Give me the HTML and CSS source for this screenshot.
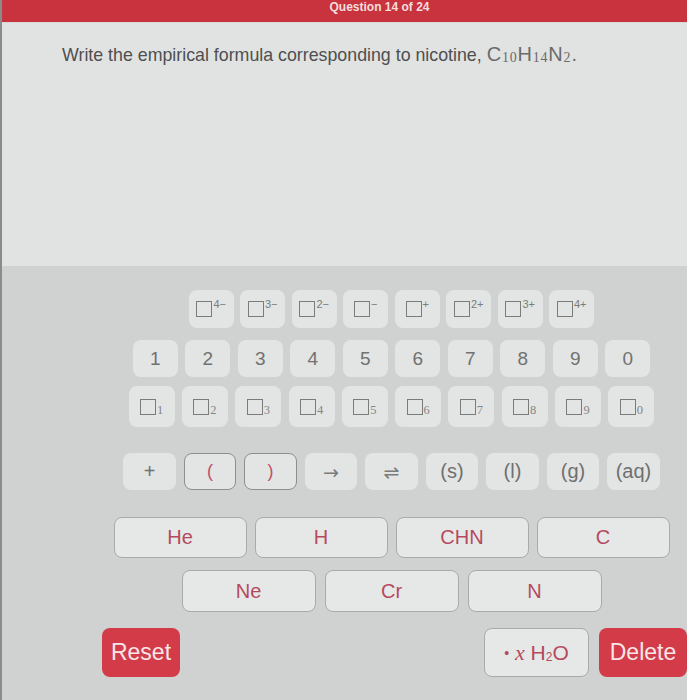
FILE: index.html
```html
<!DOCTYPE html>
<html>
<head>
<meta charset="utf-8">
<link rel="stylesheet" href="styles.css">
</head>
<body>
<div class="page">
  <header class="topbar"><span class="qnum">Question 14 of 24</span></header>
  <section class="question">
    <p class="prompt">Write the empirical formula corresponding to nicotine, <span class="formula">C<sub>10</sub>H<sub>14</sub>N<sub>2</sub>.</span></p>
  </section>
  <section class="keypad">
    <div class="row row-charge">
      <button class="key"><span class="box"></span><sup>4−</sup></button>
      <button class="key"><span class="box"></span><sup>3−</sup></button>
      <button class="key"><span class="box"></span><sup>2−</sup></button>
      <button class="key"><span class="box"></span><sup>−</sup></button>
      <button class="key"><span class="box"></span><sup>+</sup></button>
      <button class="key"><span class="box"></span><sup>2+</sup></button>
      <button class="key"><span class="box"></span><sup>3+</sup></button>
      <button class="key"><span class="box"></span><sup>4+</sup></button>
    </div>
    <div class="row row-digit">
      <button class="key num">1</button>
      <button class="key num">2</button>
      <button class="key num">3</button>
      <button class="key num">4</button>
      <button class="key num">5</button>
      <button class="key num">6</button>
      <button class="key num">7</button>
      <button class="key num">8</button>
      <button class="key num">9</button>
      <button class="key num">0</button>
    </div>
    <div class="row row-sub">
      <button class="key"><span class="box"></span><sub>1</sub></button>
      <button class="key"><span class="box"></span><sub>2</sub></button>
      <button class="key"><span class="box"></span><sub>3</sub></button>
      <button class="key"><span class="box"></span><sub>4</sub></button>
      <button class="key"><span class="box"></span><sub>5</sub></button>
      <button class="key"><span class="box"></span><sub>6</sub></button>
      <button class="key"><span class="box"></span><sub>7</sub></button>
      <button class="key"><span class="box"></span><sub>8</sub></button>
      <button class="key"><span class="box"></span><sub>9</sub></button>
      <button class="key"><span class="box"></span><sub>0</sub></button>
    </div>
    <div class="row row-sym">
      <button class="key sym">+</button>
      <button class="key sym paren">(</button>
      <button class="key sym paren">)</button>
      <button class="key sym arrow">→</button>
      <button class="key sym arrow">⇌</button>
      <button class="key sym">(s)</button>
      <button class="key sym">(l)</button>
      <button class="key sym">(g)</button>
      <button class="key sym">(aq)</button>
    </div>
    <div class="row row-el1">
      <button class="el">He</button>
      <button class="el">H</button>
      <button class="el">CHN</button>
      <button class="el">C</button>
    </div>
    <div class="row row-el2">
      <button class="el">Ne</button>
      <button class="el">Cr</button>
      <button class="el">N</button>
    </div>
    <div class="row row-act">
      <button class="act">Reset</button>
      <button class="el water"><span class="dot">•</span> <i class="xv">x</i> H<sub>2</sub>O</button>
      <button class="act del">Delete</button>
    </div>
  </section>
</div>
</body>
</html>
```
FILE: styles.css
```css
* { box-sizing: border-box; }
html, body { margin: 0; padding: 0; }
body {
  width: 687px;
  height: 700px;
  overflow: hidden;
  background: #d0d2d1;
  font-family: "Liberation Sans", Arial, sans-serif;
}
.page {
  width: 687px;
  height: 700px;
  display: flex;
  flex-direction: column;
  border-left: 2px solid #8a8c8b;
}
.topbar {
  height: 22px;
  background: #c8333d;
  display: flex;
  justify-content: center;
  padding-left: 70px;
  overflow: hidden;
}
.qnum {
  color: #f2dede;
  font-size: 12px;
  font-weight: bold;
  line-height: 13px;
  margin-top: 1px;
}
.question {
  height: 244px;
  background: #e1e3e2;
  padding: 20px 0 0 60px;
  border-top: 1px solid #d6d8d7;
}
.prompt {
  margin: 0;
  font-size: 17.8px;
  color: #4e4f4f;
}
.formula { color: #6a6b6b; font-size: 20px; letter-spacing: 0.8px; }
.formula sub {
  font-family: "Liberation Serif", serif;
  font-size: 14px;
  vertical-align: -1px;
}
.keypad {
  flex: 1;
  display: flex;
  flex-direction: column;
  padding: 24px 0 0 94px;
}
.row {
  display: flex;
  justify-content: center;
}
button {
  font-family: "Liberation Sans", Arial, sans-serif;
  padding: 0;
  margin: 0;
  cursor: pointer;
}
.key {
  width: 45px;
  background: #e3e5e4;
  border: none;
  border-radius: 8px;
  display: flex;
  align-items: center;
  justify-content: center;
  color: #6e6f6f;
}
.row-charge { gap: 6.5px; height: 38px; }
.row-digit { gap: 7.5px; height: 37px; margin-top: 12px; }
.row-sub { gap: 7.3px; height: 41px; margin-top: 9px; }
.row-sub .key { width: 46px; }
.row-sym { gap: 8px; height: 37px; margin-top: 26px; }
.row-el1 { gap: 8px; height: 41px; margin-top: 27px; }
.row-el2 { gap: 9px; height: 42px; margin-top: 12px; }
.row-act {
  height: 49px;
  margin-top: 16px;
  margin-left: -94px;
  padding-left: 100px;
  justify-content: flex-start;
}
.box {
  display: inline-block;
  width: 16px;
  height: 16px;
  border: 1.7px solid #7a7b7b;
}
.key sup {
  font-size: 11px;
  align-self: flex-start;
  margin-top: 9px;
  margin-left: 1px;
  color: #7a7b7b;
  line-height: 11px;
}
.key sub {
  font-family: "Liberation Serif", serif;
  font-size: 12.5px;
  align-self: flex-end;
  margin-bottom: 11px;
  margin-left: 1px;
  color: #858686;
  line-height: 11px;
}
.num { font-size: 19px; color: #707171; }
.sym {
  width: 52.5px;
  font-size: 20px;
  color: #6f7070;
}
.paren {
  border: 1.5px solid #8d8f8e;
  color: #c0506a;
  font-size: 18px;
}
.arrow { font-family: "DejaVu Sans", sans-serif; font-size: 19px; color: #7a7b7b; }
.el {
  width: 133px;
  background: #e6e8e7;
  border: 1.5px solid #a9abaa;
  border-radius: 8px;
  font-size: 20px;
  color: #b54a5e;
}
.row-el2 .el { width: 134px; }
.act {
  width: 78px;
  background: #d33b48;
  border: none;
  border-radius: 8px;
  color: #f6e6e8;
  font-size: 23px;
}
.water {
  width: 105px;
  margin-left: auto;
  font-size: 21px;
}
.water .dot { font-size: 14px; vertical-align: 2px; }
.water .xv { font-family: "Liberation Serif", serif; font-size: 22px; }
.water sub { font-size: 12px; vertical-align: -1px; }
.del {
  width: 88px;
  margin-left: 10px;
}
```
